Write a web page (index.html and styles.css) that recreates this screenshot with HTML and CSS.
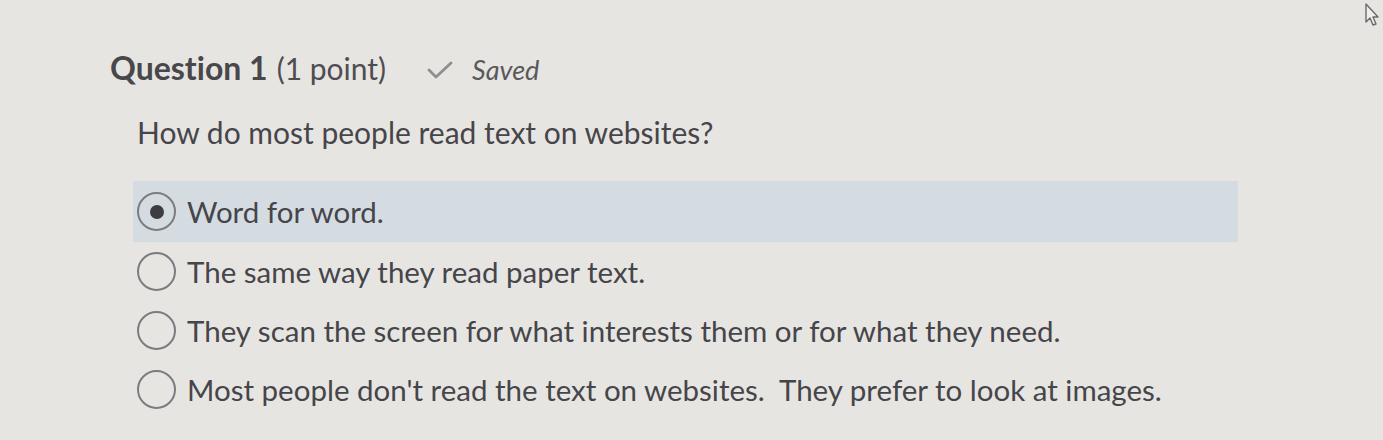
FILE: index.html
```html
<!DOCTYPE html>
<html>
<head>
<meta charset="utf-8">
<link rel="stylesheet" href="styles.css">
</head>
<body>
<div class="page">
  <div class="q-header">
    <span class="q-title">Question 1</span>
    <span class="q-points">(1 point)</span>
    <span class="saved">
      <svg class="check" width="28" height="22" viewBox="0 0 28 22"><path d="M3 11 L10 18 L25 4" fill="none" stroke="#8e8e90" stroke-width="2.8" stroke-linecap="round" stroke-linejoin="round"/></svg>
      <span class="saved-text">Saved</span>
    </span>
  </div>
  <div class="q-text">How do most people read text on websites?</div>
  <div class="options">
    <div class="option selected"><span class="radio"><span class="dot"></span></span><span class="label">Word for word.</span></div>
    <div class="option"><span class="radio"></span><span class="label">The same way they read paper text.</span></div>
    <div class="option"><span class="radio"></span><span class="label">They scan the screen for what interests them or for what they need.</span></div>
    <div class="option"><span class="radio"></span><span class="label">Most people don't read the text on websites.&nbsp; They prefer to look at images.</span></div>
  </div>
</div>
<svg class="cursor" width="16" height="24" viewBox="0 0 16 24"><path d="M2 1 L2 19 L6 15 L9 22 L12 21 L9 14 L14 14 Z" fill="#f0eeec" stroke="#6a6a6c" stroke-width="1.4" stroke-linejoin="round"/></svg>
</body>
</html>
```
FILE: styles.css
```css
html, body {
  margin: 0;
  padding: 0;
  background: #e7e5e2;
  width: 1383px;
  height: 440px;
  overflow: hidden;
  font-family: Lato, "Open Sans", sans-serif;
  font-variant-ligatures: none;
  color: #4a4a4d;
}
.page {
  padding: 48px 0 0 110px;
}
.q-header {
  display: flex;
  align-items: baseline;
  height: 42px;
}
.q-title {
  font-size: 32px;
  font-weight: 700;
  color: #48474a;
}
.q-points {
  font-size: 30px;
  margin-left: 9px;
  color: #4e4d50;
}
.saved {
  display: inline-flex;
  align-items: center;
  margin-left: 40px;
}
.check {
  margin-right: 18px;
  position: relative;
  top: 1px;
}
.saved-text {
  font-style: italic;
  font-size: 27px;
  color: #59595c;
}
.q-text {
  font-size: 30px;
  margin: 24px 0 0 27px;
  color: #46464a;
}
.options {
  margin: 31px 0 0 23px;
  width: 1105px;
  display: flex;
  flex-direction: column;
}
.option {
  display: flex;
  align-items: center;
  height: 59px;
  padding-left: 4px;
}
.option.selected {
  background: #d4dce2;
  height: 61px;
}
.radio {
  width: 39px;
  height: 39px;
  border: 2px solid #7c7c80;
  border-radius: 50%;
  box-sizing: border-box;
  display: flex;
  align-items: center;
  justify-content: center;
  flex-shrink: 0;
  background: transparent;
}
.dot {
  width: 14px;
  height: 14px;
  border-radius: 50%;
  background: #3e3e42;
}
.label {
  font-size: 29.5px;
  margin-left: 11px;
  color: #45454a;
}
.cursor {
  position: absolute;
  top: 3px;
  right: 3px;
}
```
